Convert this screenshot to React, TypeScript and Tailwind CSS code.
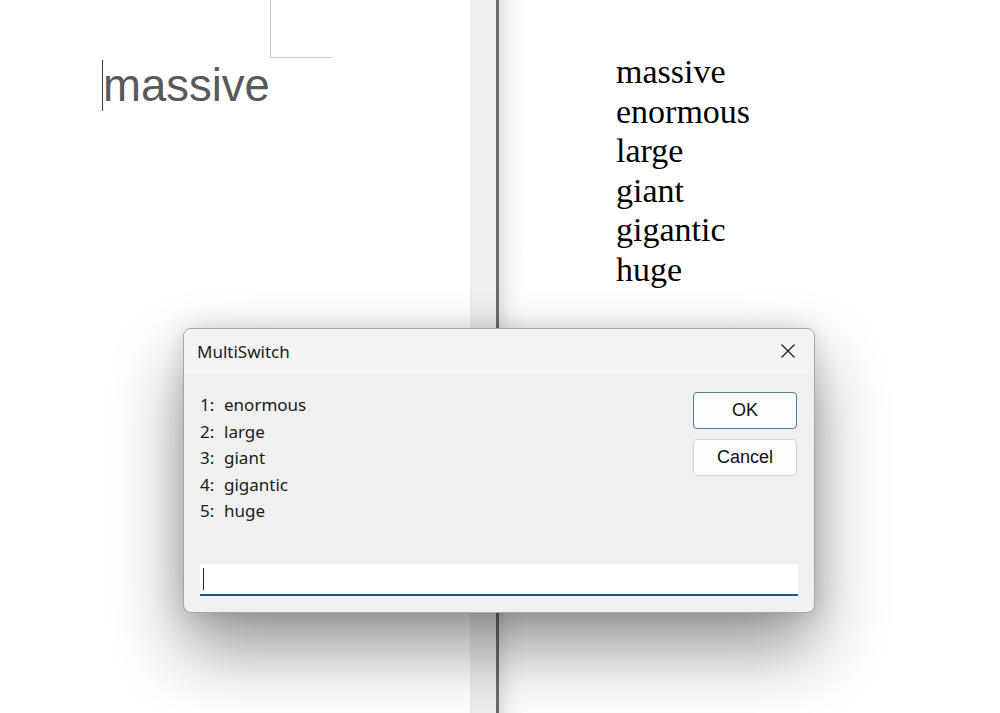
import React from "react";

const items = ["enormous", "large", "giant", "gigantic", "huge"];
const rightWords = ["massive", "enormous", "large", "giant", "gigantic", "huge"];

export default function App() {
  return (
    <div className="relative w-[1000px] h-[713px] overflow-hidden bg-white">
      <div className="flex h-full">
        {/* left page */}
        <div className="w-[470px] h-full bg-white flex flex-col">
          <div className="ml-[270px] w-[62px] h-[58px] border-l border-b border-[#c8c8c8]" />
          <div className="flex items-start ml-[102px] mt-[2px]">
            <div className="w-[1px] h-[51px] bg-[#3c3c3c]" />
            <span
              className="text-[45.5px] leading-[51px] text-[#595959]"
              style={{ fontFamily: '"Liberation Sans", Arial, sans-serif' }}
            >
              massive
            </span>
          </div>
        </div>
        {/* gutter strip */}
        <div className="w-[26px] h-full bg-[#efefef]" />
        <div className="w-[3px] h-full bg-[#6b6b6b]" />
        {/* right page */}
        <div className="flex-1 h-full bg-[linear-gradient(to_right,#e4e4e4,#f7f7f7_12px,#ffffff_26px)] pt-[52px] pl-[117px]">
          <div
            className="flex flex-col text-[34px] leading-[39.6px] text-black"
            style={{ fontFamily: '"Liberation Serif", "Times New Roman", serif' }}
          >
            {rightWords.map((w) => (
              <span key={w}>{w}</span>
            ))}
          </div>
        </div>
      </div>

      {/* dialog */}
      <div
        className="absolute left-[183px] top-[328px] w-[632px] h-[285px] rounded-[8px] border border-[#a6a6a6] bg-[#f0f0f0] shadow-[0_36px_70px_rgba(0,0,0,0.42),0_0_24px_rgba(0,0,0,0.14)] overflow-hidden flex flex-col"
        style={{ fontFamily: '"Noto Sans", "Segoe UI", sans-serif' }}
      >
        <div className="h-[44px] bg-[#f3f3f3] flex items-center justify-between pl-[13px] pr-[17px]">
          <span className="text-[17px] text-[#1b1b1b] mt-[1px]">MultiSwitch</span>
          <svg width="16" height="16" viewBox="0 0 16 16" className="mr-[1px]">
            <path d="M1.5 1.5 L14.5 14.5 M14.5 1.5 L1.5 14.5" stroke="#1a1a1a" strokeWidth="1.2" fill="none" />
          </svg>
        </div>
        <div className="flex flex-1 pl-[16px] pr-[17px] pt-[19px]">
          <div className="flex-1 flex flex-col">
            {items.map((w, i) => (
              <div key={w} className="flex text-[17px] leading-[26.5px] text-[#1b1b1b]">
                <span className="w-[24px]">{i + 1}:</span>
                <span>{w}</span>
              </div>
            ))}
          </div>
          <div
            className="flex flex-col gap-[10px]"
            style={{ fontFamily: '"Liberation Sans", Arial, sans-serif' }}
          >
            <button className="w-[104px] h-[37px] rounded-[4px] border border-[#4d7d98] bg-[#fdfdfd] text-[18px] text-[#111]">
              OK
            </button>
            <button className="w-[104px] h-[37px] rounded-[4px] border border-[#d3d3d3] bg-[#fdfdfd] text-[18px] text-[#111]">
              Cancel
            </button>
          </div>
        </div>
        <div className="px-[16px] pb-[16px]">
          <div className="h-[32px] bg-white border-b-2 border-[#165c88] flex items-center pl-[3px]">
            <div className="w-[1px] h-[22px] bg-[#222]" />
          </div>
        </div>
      </div>
    </div>
  );
}
